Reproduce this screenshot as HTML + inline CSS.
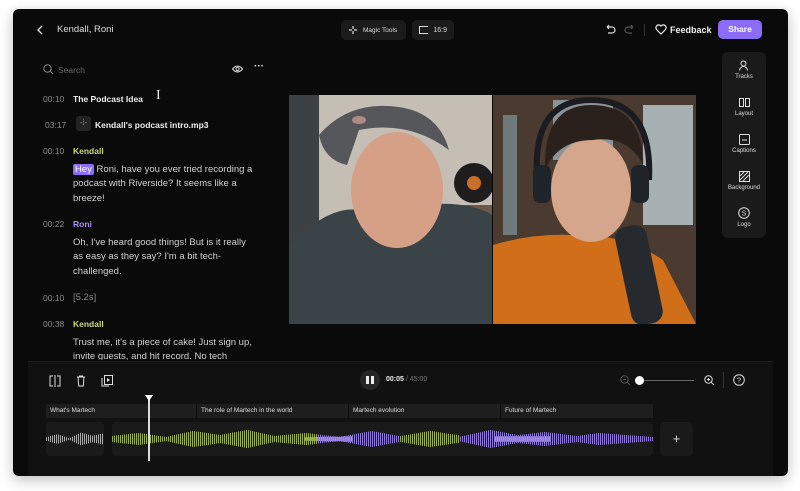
<!DOCTYPE html>
<html><head><meta charset="utf-8"><style>
*{margin:0;padding:0;box-sizing:border-box}
body{width:800px;height:491px;background:#fff;font-family:"Liberation Sans",sans-serif;position:relative;overflow:hidden;color:#e8e8e8}
.win{position:absolute;left:13px;top:9px;width:775px;height:467px;background:#0b0a0b;border-radius:6px;box-shadow:0 4px 14px rgba(0,0,0,.25);overflow:hidden}
.a{position:absolute}
.t{font-size:11px;white-space:nowrap}
.btn{position:absolute;background:#1b1b1c;border-radius:5px;height:20px;font-size:7px;color:#ddd;display:flex;align-items:center;gap:5px;padding:0 7px;white-space:nowrap}
.ts{position:absolute;left:43px;font-size:8.5px;color:#8a8a8a}
.tx{position:absolute;left:73px;font-size:9.5px;line-height:14.3px;color:#d0d0d0;width:182px}
.sp{position:absolute;left:73px;font-size:8.5px;font-weight:bold;white-space:nowrap}
.side{position:absolute;left:722px;top:52px;width:44px;height:186px;background:#1a1a1b;border-radius:6px}
.si{position:absolute;left:0;width:44px;text-align:center;font-size:6px;color:#ddd}
.ch{position:absolute;top:404px;height:14px;background:#1e1e1f;font-size:6.5px;color:#ddd;line-height:14px;padding-left:4px;white-space:nowrap}
.wv{position:absolute;height:12px;top:433px}
</style></head><body>
<div class="win"><div class="a" style="left:15px;top:352px;width:745px;height:115px;background:#111112;border-top:1px solid #1e1e1e"></div></div>
<!-- top bar -->
<svg class="a" style="left:36px;top:25px" width="10" height="10"><path d="M6 1L2 5l4 4" stroke="#ddd" stroke-width="1.4" fill="none"/></svg>
<div class="a t" style="left:57px;top:24px;font-size:9.5px;color:#ddd">Kendall, Roni</div>
<div class="btn" style="left:341px;top:20px;width:65px;font-size:6.5px"><svg width="10" height="10"><path d="M5 1v3M5 6v3M1 5h3M6 5h3" stroke="#ddd" stroke-width="1.2"/></svg>Magic Tools</div>
<div class="btn" style="left:412px;top:20px;width:42px"><svg width="11" height="8"><rect x=".5" y=".5" width="10" height="7" stroke="#ddd" fill="none"/></svg>16:9</div>
<svg class="a" style="left:604px;top:24px" width="12" height="12"><path d="M3 3h5a3 3 0 010 6H4M3 3l2-2M3 3l2 2" stroke="#ddd" stroke-width="1.2" fill="none"/></svg>
<svg class="a" style="left:624px;top:24px" width="12" height="12"><path d="M9 3H4a3 3 0 000 6h4M9 3L7 1M9 3L7 5" stroke="#555" stroke-width="1.2" fill="none"/></svg>
<div class="a" style="left:644px;top:24px;width:1px;height:12px;background:#333"></div>
<svg class="a" style="left:655px;top:24px" width="12" height="11"><path d="M6 10L1.5 5.5A2.5 2.5 0 016 2a2.5 2.5 0 014.5 3.5z" stroke="#eee" stroke-width="1.2" fill="none"/></svg>
<div class="a t" style="left:670px;top:25px;font-size:9px;font-weight:bold;color:#eee">Feedback</div>
<div class="a" style="left:718px;top:20px;width:44px;height:19px;background:#8c6cf7;border-radius:5px;font-size:8.5px;font-weight:bold;color:#fff;text-align:center;line-height:19px">Share</div>
<!-- search -->
<svg class="a" style="left:43px;top:64px" width="11" height="11"><circle cx="4.5" cy="4.5" r="3.7" stroke="#888" fill="none"/><path d="M7.3 7.3L10 10" stroke="#888"/></svg>
<div class="a" style="left:58px;top:65px;font-size:8.5px;color:#666">Search</div>
<svg class="a" style="left:232px;top:65px" width="11" height="8"><path d="M.5 4Q5.5-2 10.5 4Q5.5 10 .5 4z" stroke="#ddd" fill="none"/><circle cx="5.5" cy="4" r="1.6" stroke="#ddd" fill="none"/></svg>
<div class="a" style="left:254px;top:61px;font-size:10px;color:#ddd;font-weight:bold">···</div>
<!-- transcript -->
<div class="ts" style="top:94px">00:10</div><div class="sp" style="top:94px;color:#eee;font-size:8.5px">The Podcast Idea</div>
<div class="a" style="left:156px;top:88px;font-size:14px;color:#eee;font-family:'Liberation Serif',serif">I</div>
<div class="ts" style="top:120px;left:45px">03:17</div>
<div class="a" style="left:76px;top:116px;width:15px;height:15px;background:#232323;border-radius:3px;font-size:7px;color:#bbb;text-align:center;line-height:15px">-⁞-</div>
<div class="sp" style="top:120px;left:95px;color:#eee">Kendall's podcast intro.mp3</div>
<div class="ts" style="top:146px">00:10</div><div class="sp" style="top:146px;color:#c6d879">Kendall</div>
<div class="tx" style="top:163px"><span style="background:#8c6cf7;color:#fff;padding:0 2px;border-radius:2px">Hey</span> Roni, have you ever tried recording a podcast with Riverside? It seems like a breeze!</div>
<div class="ts" style="top:219px">00:22</div><div class="sp" style="top:219px;color:#a890f5">Roni</div>
<div class="tx" style="top:236px">Oh, I've heard good things! But is it really as easy as they say? I'm a bit tech-challenged.</div>
<div class="ts" style="top:293px">00:10</div><div class="tx" style="top:291px;color:#888">[5.2s]</div>
<div class="ts" style="top:319px">00:38</div><div class="sp" style="top:319px;color:#c6d879">Kendall</div>
<div class="tx" style="top:336px;height:24px;overflow:hidden">Trust me, it's a piece of cake! Just sign up, invite guests, and hit record. No tech</div>
<!-- videos -->
<svg class="a" style="left:289px;top:95px" width="203" height="229">
<rect width="203" height="229" fill="#c5beb4"/><rect width="30" height="229" fill="#3c4144"/>
<rect x="155" y="110" width="48" height="10" fill="#6a5848"/>
<circle cx="185" cy="88" r="20" fill="#1e1c1c"/><circle cx="185" cy="88" r="7" fill="#c8702a"/>
<path d="M0 150Q40 110 70 115L130 110Q180 105 203 120V229H0z" fill="#3a4448"/>
<ellipse cx="108" cy="95" rx="46" ry="58" fill="#d6a087"/>
<path d="M30 40Q60 5 110 12Q150 18 160 55Q120 25 70 35L58 70Q35 65 30 40z" fill="#55575a"/>
<ellipse cx="70" cy="25" rx="7" ry="4" fill="#b08a84"/>
</svg>
<svg class="a" style="left:493px;top:95px" width="203" height="229">
<rect width="203" height="229" fill="#4b3a2f"/>
<rect x="60" y="5" width="60" height="60" fill="#8a9498"/><rect x="150" y="10" width="50" height="120" fill="#a7b0b2"/>
<rect x="10" y="20" width="14" height="120" fill="#6f7a7c"/>
<path d="M0 229V150Q40 138 80 140Q130 138 170 165L203 229z" fill="#d06e1a"/>
<ellipse cx="98" cy="95" rx="40" ry="52" fill="#d5a58c"/>
<path d="M52 75Q50 10 98 10Q150 10 150 70Q135 40 100 45Q65 45 52 75z" fill="#2a201c"/>
<path d="M44 80Q40 5 98 5Q160 5 156 85" stroke="#1a1c22" stroke-width="6" fill="none"/>
<rect x="40" y="70" width="18" height="38" rx="7" fill="#1f242b"/><rect x="138" y="70" width="18" height="38" rx="7" fill="#1f242b"/>
<rect x="130" y="130" width="32" height="100" rx="12" fill="#262a2f" transform="rotate(-12 146 180)"/>
</svg>
<!-- side -->
<div class="side">
<svg class="a" style="left:17px;top:8px" width="11" height="11"><circle cx="4.5" cy="3.5" r="2.5" stroke="#ddd" fill="none"/><path d="M.5 10.5a4 4 0 018 0" stroke="#ddd" fill="none"/></svg>
<div class="si" style="top:22px">Tracks</div>
<svg class="a" style="left:17px;top:46px" width="11" height="9"><rect x=".5" y=".5" width="4" height="8" stroke="#ddd" fill="none"/><rect x="6.5" y=".5" width="4" height="8" stroke="#ddd" fill="none"/></svg>
<div class="si" style="top:59px">Layout</div>
<svg class="a" style="left:17px;top:82px" width="11" height="11"><rect x=".5" y=".5" width="10" height="10" rx="1" stroke="#ddd" fill="none"/><path d="M3 6h5" stroke="#ddd"/></svg>
<div class="si" style="top:96px">Captions</div>
<svg class="a" style="left:17px;top:119px" width="11" height="11"><rect x=".5" y=".5" width="10" height="10" stroke="#ddd" fill="none"/><path d="M1 5l4-4M1 9l8-8M4 10l6-6" stroke="#ddd"/></svg>
<div class="si" style="top:133px">Background</div>
<svg class="a" style="left:16px;top:155px" width="12" height="12"><circle cx="6" cy="6" r="5.3" stroke="#ddd" fill="none"/><text x="6" y="8.5" font-size="7" fill="#ddd" text-anchor="middle" font-family="Liberation Sans">S</text></svg>
<div class="si" style="top:170px">Logo</div>
</div>
<!-- bottom controls -->
<svg class="a" style="left:49px;top:375px" width="12" height="12"><path d="M4 1H1v10h3M8 1h3v10H8" stroke="#ddd" fill="none"/><path d="M6 0v12" stroke="#ddd"/></svg>
<svg class="a" style="left:76px;top:375px" width="10" height="12"><path d="M1 2h8M3.5 2V1h3v1M2 2l.7 9h4.6L8 2" stroke="#ddd" fill="none"/></svg>
<svg class="a" style="left:101px;top:375px" width="12" height="12"><rect x="3.5" y=".5" width="8" height="9" stroke="#ddd" fill="none"/><path d="M1 3v8h7" stroke="#ddd" fill="none"/><path d="M6 3l3 2-3 2z" fill="#ddd"/></svg>
<div class="a" style="left:360px;top:370px;width:20px;height:20px;border-radius:50%;background:#262626"></div>
<div class="a" style="left:366px;top:376px;width:2.5px;height:8px;background:#eee"></div><div class="a" style="left:371px;top:376px;width:2.5px;height:8px;background:#eee"></div>
<div class="a" style="left:386px;top:376px;font-size:7px;font-weight:bold;color:#eee">00:05 <span style="color:#777;font-weight:normal">/ 45:00</span></div>
<svg class="a" style="left:620px;top:375px" width="10" height="10"><circle cx="4.5" cy="4.5" r="3.7" stroke="#555" fill="none"/><path d="M3 4.5h3M7.3 7.3L10 10" stroke="#555"/></svg>
<div class="a" style="left:640px;top:380px;width:54px;height:1px;background:#666"></div>
<div class="a" style="left:635px;top:376px;width:9px;height:9px;border-radius:50%;background:#fff"></div>
<svg class="a" style="left:704px;top:375px" width="11" height="11"><circle cx="4.5" cy="4.5" r="3.7" stroke="#ddd" fill="none"/><path d="M3 4.5h3M4.5 3v3M7.3 7.3L10 10" stroke="#ddd"/></svg>
<div class="a" style="left:723px;top:372px;width:1px;height:16px;background:#333"></div>
<svg class="a" style="left:733px;top:374px" width="12" height="12"><circle cx="6" cy="6" r="5.3" stroke="#ddd" fill="none"/><text x="6" y="8.7" font-size="7.5" fill="#ddd" text-anchor="middle" font-family="Liberation Sans">?</text></svg>
<div class="ch" style="left:46px;width:150px">What's Martech</div>
<div class="ch" style="left:197px;width:151px">The role of Martech in the world</div>
<div class="ch" style="left:349px;width:151px">Martech evolution</div>
<div class="ch" style="left:501px;width:152px">Future of Martech</div>
<div class="a" style="left:46px;top:422px;width:58px;height:34px;background:#1a1a1b;border-radius:4px"></div>
<div class="a" style="left:112px;top:422px;width:541px;height:34px;background:#1a1a1b;border-radius:4px"></div>
<div class="wv" style="left:46px;width:58px;top:431px;height:16px;background:repeating-linear-gradient(90deg,#aaa 0 1px,transparent 1px 2px);clip-path:polygon(0 40%,20% 20%,40% 45%,60% 10%,80% 30%,100% 15%,100% 85%,80% 70%,60% 90%,40% 55%,20% 80%,0 60%)"></div>
<div class="wv" style="left:112px;width:541px;top:429px;height:20px;background:repeating-linear-gradient(90deg,#9aae4c 0 1px,transparent 1px 2px) 0 0/38% 100% no-repeat,repeating-linear-gradient(90deg,#8e78d6 0 1.2px,transparent 1.2px 2px);clip-path:polygon(0 35%,5% 20%,10% 40%,15% 10%,20% 30%,25% 5%,30% 35%,36% 20%,42% 40%,48% 10%,53% 35%,58% 25%,64% 40%,70% 5%,75% 30%,80% 15%,86% 35%,90% 20%,95% 30%,100% 40%,100% 60%,95% 70%,90% 80%,86% 65%,80% 85%,75% 70%,70% 95%,64% 60%,58% 75%,53% 65%,48% 90%,42% 60%,36% 80%,30% 65%,25% 95%,20% 70%,15% 90%,10% 60%,5% 80%,0 65%)"></div>
<div class="wv" style="left:305px;width:47px;top:430px;height:18px;background:repeating-linear-gradient(90deg,#9aae4c 0 1px,transparent 1px 2px);clip-path:polygon(0 40%,100% 35%,100% 65%,0 60%)"></div>
<div class="wv" style="left:400px;width:60px;top:430px;height:18px;background:repeating-linear-gradient(90deg,#9aae4c 0 1px,transparent 1px 2px);clip-path:polygon(0 35%,50% 5%,100% 30%,100% 70%,50% 95%,0 65%)"></div>
<div class="wv" style="left:495px;width:55px;top:430px;height:18px;background:repeating-linear-gradient(90deg,#9aae4c 0 1px,transparent 1px 2px);clip-path:polygon(0 35%,100% 35%,100% 65%,0 65%)"></div>
<div class="a" style="left:660px;top:422px;width:33px;height:34px;background:#1a1a1b;border-radius:5px;text-align:center;line-height:33px;font-size:13px;color:#ddd">+</div>
<div class="a" style="left:148px;top:399px;width:1.5px;height:62px;background:#ddd"></div>
<svg class="a" style="left:145px;top:395px" width="8" height="7"><path d="M0 0h8L4 6z" fill="#fff"/></svg>
</body></html>
